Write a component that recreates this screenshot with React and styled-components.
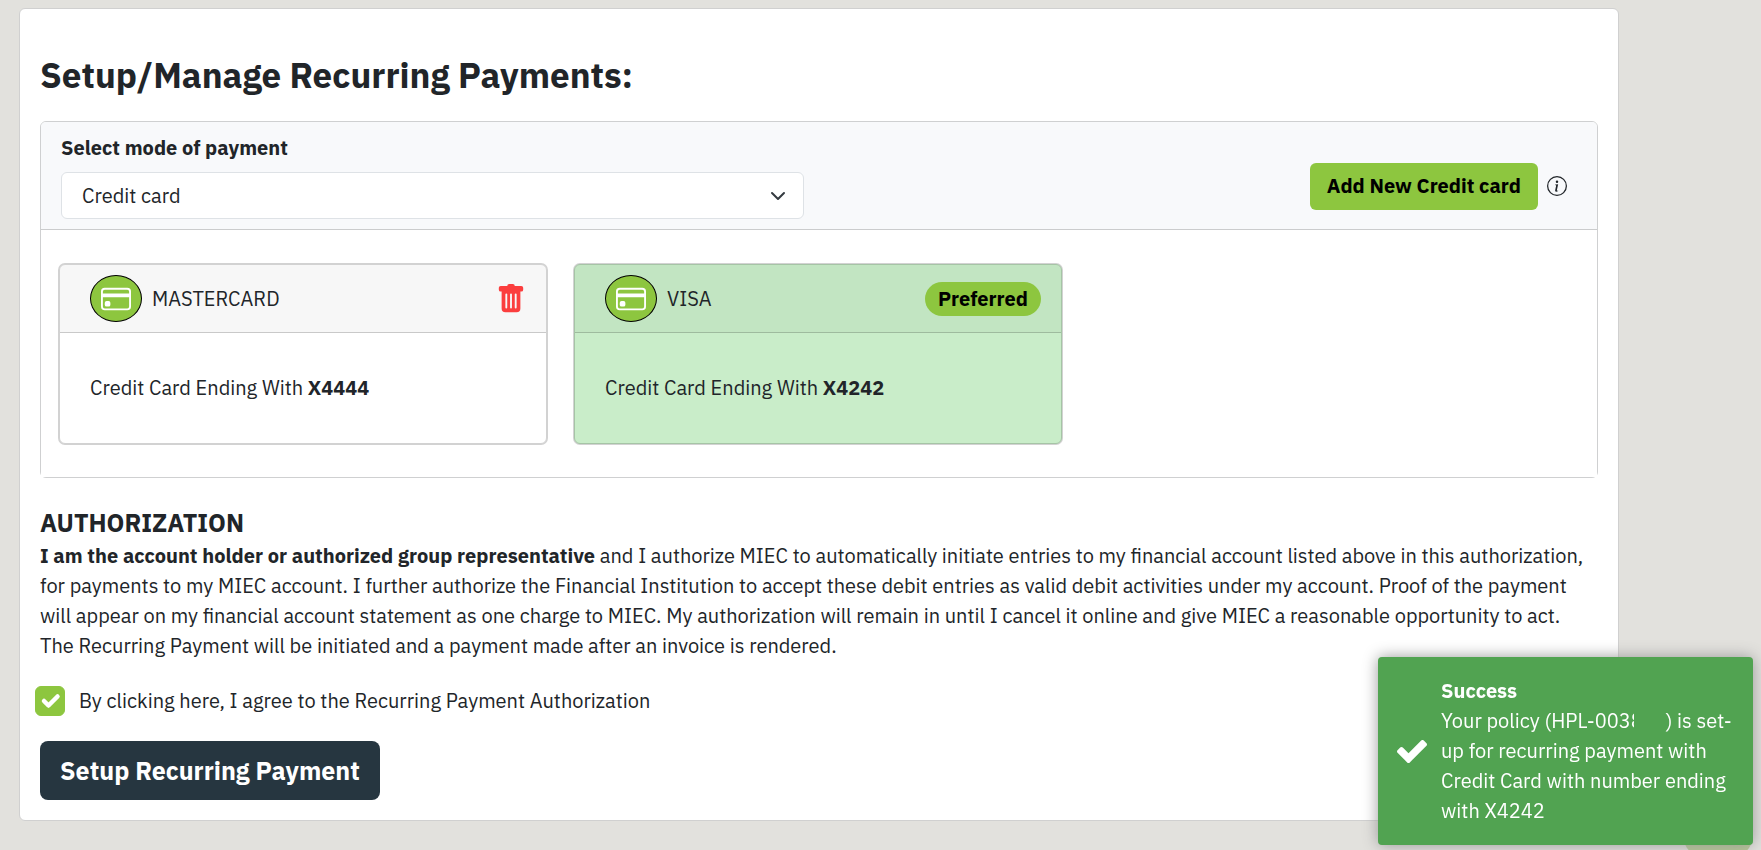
import React, { useState } from "react";
import styled, { createGlobalStyle } from "styled-components";
import { BsCreditCard, BsInfoCircle, BsTrashFill } from "react-icons/bs";

const GlobalStyle = createGlobalStyle`
  * {
    box-sizing: border-box;
  }
  body {
    margin: 0;
    background-color: #e2e1dd;
    color: #212529;
    font-family: "IBM Plex Sans", "Noto Sans", sans-serif;
    font-size: 20px;
    line-height: 30px;
  }
  button,
  select {
    font: inherit;
    color: inherit;
  }
`;

const Panel = styled.main`
  margin: 8px 142px 29px 19px;
  padding: 45px 20px 20px;
  background-color: #fff;
  border: 1px solid #d0d0d0;
  border-radius: 6px;
`;

const Title = styled.h1`
  margin: 0 0 25px;
  font-size: 35px;
  line-height: 42px;
  font-weight: 700;
`;

const MethodBox = styled.section`
  border: 1px solid #cfd0d1;
  border-radius: 6px;
`;

const MethodHeader = styled.div`
  display: grid;
  grid-template-columns: 1fr 1fr;
  gap: 30px;
  padding: 11px 20px 10px;
  background-color: #f8f9fb;
  border-bottom: 1px solid #cbcccd;
  border-radius: 5px 5px 0 0;
`;

const ModeLabel = styled.label`
  display: block;
  margin-bottom: 9px;
  font-weight: 700;
`;

const SelectWrap = styled.div`
  position: relative;
`;

const ModeSelect = styled.select`
  display: block;
  width: 100%;
  height: 47px;
  padding: 0 50px 0 20px;
  appearance: none;
  background-color: #fff;
  border: 1px solid #dee2e6;
  border-radius: 6px;
`;

const Chevron = styled.svg`
  position: absolute;
  top: 16px;
  right: 18px;
  pointer-events: none;
`;

const AddArea = styled.div`
  display: flex;
  align-items: center;
  justify-content: flex-end;
  gap: 9px;
  padding: 20px 10px 0 0;
`;

const AddButton = styled.button`
  height: 47px;
  padding: 0 17px;
  background-color: #8dc63f;
  border: none;
  border-radius: 6px;
  color: #000;
  font-weight: 700;
`;

const CardGrid = styled.div`
  display: grid;
  grid-template-columns: repeat(3, 1fr);
  gap: 27px;
  padding: 34px 20px 33px 18px;
  background-color: #fff;
`;

const PayCard = styled.article`
  background-color: ${(props) => (props.$preferred ? "#c9edc9" : "#fff")};
  border: 1px solid ${(props) => (props.$preferred ? "#a6c4a6" : "#d2d2d2")};
  border-radius: 6px;
  box-shadow: 0 0 0 1px #d2d2d2;
`;

const PayCardHeader = styled.div`
  display: flex;
  align-items: center;
  gap: 10px;
  padding: 10px 20px 10px 30px;
  background-color: rgba(0, 0, 0, 0.03);
  border-bottom: 1px solid rgba(0, 0, 0, 0.19);
  border-radius: 5px 5px 0 0;
`;

const BrandIcon = styled.span`
  display: flex;
  align-items: center;
  justify-content: center;
  width: 52px;
  height: 47px;
  background-color: #8dc63f;
  border: 1px solid #000;
  border-radius: 50%;
  color: #fff;
`;

const Brand = styled.span`
  flex: 1;
`;

const DeleteButton = styled.button`
  display: flex;
  padding: 0;
  background: none;
  border: none;
  color: #fb3e3e;
`;

const Badge = styled.span`
  padding: 2px 13px;
  background-color: #8dc63f;
  border-radius: 17px;
  color: #000;
  font-weight: 700;
`;

const PayCardBody = styled.p`
  margin: 0;
  padding: 40px 30px;
`;

const AuthTitle = styled.h2`
  margin: 27px 0 0;
  font-size: 25px;
  line-height: 36px;
  font-weight: 700;
`;

const AuthText = styled.p`
  margin: 0;
`;

const AgreeRow = styled.div`
  display: flex;
  align-items: center;
  gap: 14px;
  margin: 25px 0 25px -5px;
`;

const CheckWrap = styled.span`
  position: relative;
  display: flex;
`;

const AgreeBox = styled.input`
  width: 30px;
  height: 30px;
  margin: 0;
  appearance: none;
  background-color: #fff;
  border: 1px solid #8dc63f;
  border-radius: 6px;
  &:checked {
    background-color: #8dc63f;
  }
`;

const AgreeMark = styled.svg`
  position: absolute;
  inset: 0;
  pointer-events: none;
`;

const SubmitButton = styled.button`
  display: block;
  height: 59px;
  padding: 0 20px;
  background-color: #263640;
  border: none;
  border-radius: 8px;
  color: #fff;
  font-size: 25px;
  font-weight: 700;
`;

const ChatButton = styled.button`
  position: fixed;
  right: 9px;
  bottom: -6px;
  width: 68px;
  height: 60px;
  background-color: #b4c791;
  border: none;
  border-radius: 18px;
`;

const Toast = styled.div`
  position: fixed;
  right: 8px;
  bottom: 5px;
  display: flex;
  align-items: center;
  gap: 14px;
  width: 375px;
  padding: 19px 15px 19px 19px;
  background-color: #51a351;
  border-radius: 4px;
  box-shadow: 0 0 15px #999;
  color: #fff;
`;

const ToastMark = styled.svg`
  flex: none;
`;

const ToastTitle = styled.div`
  font-weight: 700;
`;

/* cuts off the end of the policy number */
const Masked = styled.span`
  display: inline-block;
  width: 3px;
  height: 30px;
  margin-right: 32px;
  overflow: hidden;
  vertical-align: top;
`;

const cards = [
  { brand: "MASTERCARD", ending: "X4444", preferred: false },
  { brand: "VISA", ending: "X4242", preferred: true },
];

const App = () => {
  const [mode, setMode] = useState("credit");
  const [agreed, setAgreed] = useState(true);

  return (
    <>
      <GlobalStyle />
      <Panel>
        <Title>Setup/Manage Recurring Payments:</Title>
        <MethodBox>
          <MethodHeader>
            <div>
              <ModeLabel htmlFor="mode">Select mode of payment</ModeLabel>
              <SelectWrap>
                <ModeSelect
                  id="mode"
                  value={mode}
                  onChange={(e) => setMode(e.target.value)}
                >
                  <option value="credit">Credit card</option>
                </ModeSelect>
                <Chevron width="16" height="16" viewBox="0 0 16 16">
                  <path
                    d="m2 5 6 6 6-6"
                    fill="none"
                    stroke="#343a40"
                    strokeWidth="2"
                    strokeLinecap="round"
                    strokeLinejoin="round"
                  />
                </Chevron>
              </SelectWrap>
            </div>
            <AddArea>
              <AddButton type="button">Add New Credit card</AddButton>
              <BsInfoCircle size={20} />
            </AddArea>
          </MethodHeader>
          <CardGrid>
            {cards.map((card) => (
              <PayCard key={card.ending} $preferred={card.preferred}>
                <PayCardHeader>
                  <BrandIcon>
                    <BsCreditCard size={30} />
                  </BrandIcon>
                  <Brand>{card.brand}</Brand>
                  {card.preferred ? (
                    <Badge>Preferred</Badge>
                  ) : (
                    <DeleteButton type="button" aria-label="Delete card">
                      <BsTrashFill size={30} />
                    </DeleteButton>
                  )}
                </PayCardHeader>
                <PayCardBody>
                  Credit Card Ending With <b>{card.ending}</b>
                </PayCardBody>
              </PayCard>
            ))}
          </CardGrid>
        </MethodBox>

        <AuthTitle>AUTHORIZATION</AuthTitle>
        <AuthText>
          <b>I am the account holder or authorized group representative</b> and
          I authorize MIEC to automatically initiate entries to my financial
          account listed above in this authorization, for payments to my MIEC
          account. I further authorize the Financial Institution to accept these
          debit entries as valid debit activities under my account. Proof of the
          payment will appear on my financial account statement as one charge to
          MIEC. My authorization will remain in until I cancel it online and
          give MIEC a reasonable opportunity to act. The Recurring Payment will
          be initiated and a payment made after an invoice is rendered.
        </AuthText>

        <AgreeRow>
          <CheckWrap>
            <AgreeBox
              id="agree"
              type="checkbox"
              checked={agreed}
              onChange={(e) => setAgreed(e.target.checked)}
            />
            <AgreeMark width="30" height="30" viewBox="0 0 20 20">
              <path
                d="m6 10 3 3 6-6"
                fill="none"
                stroke="#fff"
                strokeWidth="3"
                strokeLinecap="round"
                strokeLinejoin="round"
              />
            </AgreeMark>
          </CheckWrap>
          <label htmlFor="agree">
            By clicking here, I agree to the Recurring Payment Authorization
          </label>
        </AgreeRow>
        <SubmitButton type="button">Setup Recurring Payment</SubmitButton>
      </Panel>

      <ChatButton type="button" aria-label="Help" />
      <Toast role="status">
        <ToastMark width="30" height="23" viewBox="121 338 1550 1184">
          <path
            fill="#fff"
            d="M1671 566q0 40-28 68l-724 724-136 136q-28 28-68 28t-68-28l-136-136-362-362q-28-28-28-68t28-68l136-136q28-28 68-28t68 28l294 295 656-657q28-28 68-28t68 28l136 136q28 28 28 68z"
          />
        </ToastMark>
        <div>
          <ToastTitle>Success</ToastTitle>
          Your policy (HPL-003
          <Masked>8</Masked>) is set-up for recurring payment with Credit Card
          with number ending with X4242
        </div>
      </Toast>
    </>
  );
};

export default App;
